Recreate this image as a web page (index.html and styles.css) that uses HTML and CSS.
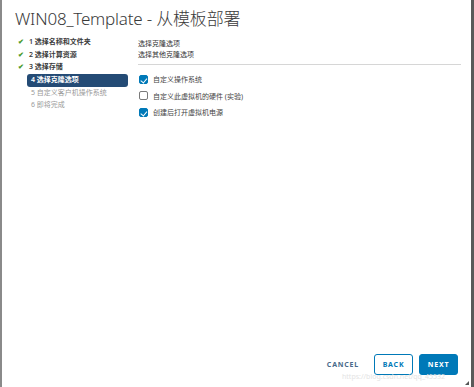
FILE: index.html
```html
<!DOCTYPE html>
<html lang="zh-CN">
<head>
    <meta charset="UTF-8">
    <title>WIN08_Template - 从模板部署</title>
    <link rel="stylesheet" href="styles.css">
</head>
<body>
    <div class="dialog">
        <h1 class="title">WIN08_Template - 从模板部署</h1>

        <div class="wizard">
            <ul class="steps">
                <li class="step done"><span class="check">&#10004;</span>1 选择名称和文件夹</li>
                <li class="step done"><span class="check">&#10004;</span>2 选择计算资源</li>
                <li class="step done"><span class="check">&#10004;</span>3 选择存储</li>
                <li class="step active">4 选择克隆选项</li>
                <li class="step todo">5 自定义客户机操作系统</li>
                <li class="step todo">6 即将完成</li>
            </ul>

            <div class="content">
                <div class="page-head">
                    <div class="page-title">选择克隆选项</div>
                    <div class="page-sub">选择其他克隆选项</div>
                </div>
                <label class="opt"><span class="box checked"></span>自定义操作系统</label>
                <label class="opt"><span class="box"></span>自定义此虚拟机的硬件 (实验)</label>
                <label class="opt"><span class="box checked"></span>创建后打开虚拟机电源</label>
            </div>
        </div>

        <div class="footer">
            <button class="btn link">CANCEL</button>
            <button class="btn outline">BACK</button>
            <button class="btn primary">NEXT</button>
        </div>
        <div class="watermark">https://blog.csdn.net/qq_45532</div>
        <div class="grip"></div>
    </div>
</body>
</html>
```

FILE: styles.css
```css
html, body {
    margin: 0;
    padding: 0;
    height: 100%;
}
body {
    background-color: #ffffff;
    font-family: "Noto Sans", "Noto Sans CJK SC", sans-serif;
    color: #333333;
    overflow: hidden;
}
.dialog {
    position: relative;
    box-sizing: border-box;
    height: 387px;
    border-left: 2px solid #8a8a8a;
    border-right: 3px solid #5a5a5a;
    padding: 0 10px 0 13px;
    display: flex;
    flex-direction: column;
}
.title {
    margin: 0;
    padding: 8px 0 0 0;
    font-size: 17px;
    font-weight: 300;
    line-height: 22px;
    color: #3a3a3a;
    letter-spacing: -0.2px;
}
.wizard {
    display: flex;
    margin-top: 6px;
    flex: 1;
}
.steps {
    list-style: none;
    margin: 0;
    padding: 0;
    width: 113px;
}
.step {
    font-size: 7px;
    line-height: 12.5px;
    height: 12.5px;
    color: #3a3a3a;
    font-weight: 600;
    display: flex;
    align-items: center;
}
.check {
    color: #4a9a2a;
    width: 11px;
    margin-left: 3px;
    font-size: 7px;
}
.step.active {
    background-color: #244b75;
    color: #ffffff;
    border-radius: 3px;
    margin-left: 12px;
    padding-left: 4px;
    height: 13px;
}
.step.todo {
    color: #9a9a9a;
    font-weight: 400;
    padding-left: 16px;
}
.content {
    flex: 1;
    margin-left: 10px;
    padding-top: 2px;
}
.page-head {
    border-bottom: 1px solid #d6d6d6;
    padding-bottom: 4px;
    margin-bottom: 6px;
}
.page-title, .page-sub {
    font-size: 7px;
    line-height: 11px;
    color: #333333;
}
.opt {
    display: flex;
    align-items: center;
    font-size: 7px;
    height: 16.5px;
    color: #444444;
}
.box {
    box-sizing: border-box;
    width: 9px;
    height: 9px;
    border: 1px solid #7a7a7a;
    border-radius: 2px;
    margin: 0 5px 0 1px;
    position: relative;
}
.box.checked {
    background-color: #0079b8;
    border-color: #0079b8;
}
.box.checked::after {
    content: "";
    position: absolute;
    left: 2px;
    top: 1px;
    width: 3px;
    height: 4.5px;
    border-right: 1.3px solid #ffffff;
    border-bottom: 1.3px solid #ffffff;
    transform: rotate(40deg);
}
.footer {
    display: flex;
    justify-content: flex-end;
    align-items: center;
    gap: 6px;
    padding-bottom: 12px;
    padding-right: 3px;
}
.btn {
    font-family: "Noto Sans", sans-serif;
    font-size: 7px;
    font-weight: 700;
    letter-spacing: 0.8px;
    height: 21px;
    width: 39px;
    border-radius: 3px;
    padding: 0;
    cursor: pointer;
}
.btn.link {
    background: none;
    border: none;
    color: #4a6a8a;
    width: auto;
    margin-right: 9px;
}
.btn.outline {
    background-color: #ffffff;
    border: 1px solid #0079b8;
    color: #0079b8;
}
.btn.primary {
    background-color: #0079b8;
    border: 1px solid #0079b8;
    color: #ffffff;
}
.watermark {
    position: absolute;
    left: 340px;
    top: 372px;
    font-size: 7px;
    color: #e4e4e4;
    white-space: nowrap;
}
.grip {
    position: absolute;
    right: 2px;
    bottom: 2px;
    width: 0;
    height: 0;
    border-left: 4px solid transparent;
    border-bottom: 4px solid #555555;
}
```
